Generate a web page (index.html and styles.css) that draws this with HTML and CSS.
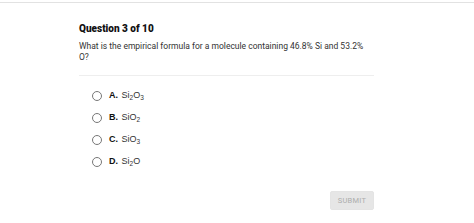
FILE: index.html
```html
<!DOCTYPE html>
<html>
    <head>
        <title>Question 3 of 10</title>
        <link rel="stylesheet" href="styles.css">
    </head>
    <body>
        <div class="topbar"></div>
        <div class="quiz">
            <h2 class="title">Question 3 of 10</h2>
            <p class="question">What is the empirical formula for a molecule containing 46.8% Si and 53.2% O?</p>
            <div class="answers">
                <label class="answer"><span class="radio"></span><span class="text"><b>A.</b> Si<sub>2</sub>O<sub>3</sub></span></label>
                <label class="answer"><span class="radio"></span><span class="text"><b>B.</b> SiO<sub>2</sub></span></label>
                <label class="answer"><span class="radio"></span><span class="text"><b>C.</b> SiO<sub>3</sub></span></label>
                <label class="answer"><span class="radio"></span><span class="text"><b>D.</b> Si<sub>2</sub>O</span></label>
            </div>
            <div class="footer">
                <button class="submit">SUBMIT</button>
            </div>
        </div>
    </body>
</html>
```

FILE: styles.css
```css
body {
    margin: 0;
    background: #fff;
    font-family: "Roboto", "Liberation Sans", sans-serif;
}

.topbar {
    height: 2px;
    border-bottom: 1px solid #e2e2e2;
}

.quiz {
    width: 295px;
    margin-left: 79px;
}

.title {
    margin: 0;
    padding-top: 19px;
    font-size: 10px;
    line-height: 13px;
    font-weight: 900;
    color: #111;
}

.question {
    margin: 6px 0 0 0;
    padding-bottom: 13px;
    font-size: 8.5px;
    line-height: 10.5px;
    color: #333;
    border-bottom: 1px solid #eeeeee;
}

.answers {
    display: flex;
    flex-direction: column;
    gap: 9px;
    padding: 13px 0 0 13px;
}

.answer {
    display: flex;
    align-items: center;
    height: 13px;
    font-family: "Liberation Sans", Arial, sans-serif;
    font-size: 9px;
    line-height: 13px;
    color: #333;
}

.answer b {
    font-weight: 900;
    color: #111;
    margin-right: 1px;
}

.answer sub {
    font-size: 6.5px;
    line-height: 0;
    vertical-align: -2px;
}

.radio {
    width: 8px;
    height: 8px;
    border: 1px solid #777;
    border-radius: 50%;
    margin-right: 7px;
}

.footer {
    display: flex;
    justify-content: flex-end;
    margin-top: 23px;
}

.submit {
    width: 44px;
    height: 19px;
    padding: 0;
    border: 1px solid #e4e4e4;
    border-radius: 2px;
    background-color: #e6e6e6;
    color: #adadad;
    font-family: "Roboto", sans-serif;
    font-size: 7.5px;
    letter-spacing: 0.3px;
}
```
